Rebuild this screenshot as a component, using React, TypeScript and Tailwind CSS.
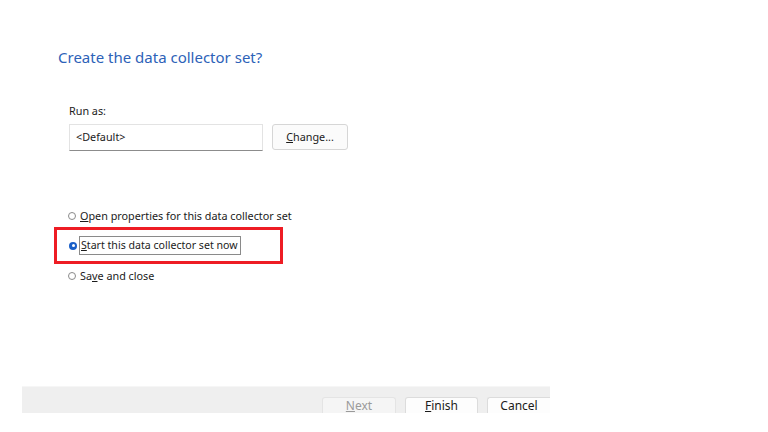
import React from 'react';

function Radio({ checked }: { checked?: boolean }) {
  if (checked) {
    return (
      <span className="w-[8px] h-[8px] rounded-full bg-[#1a5fc8] flex items-center justify-center shrink-0">
        <span className="w-[3px] h-[3px] rounded-full bg-white" />
      </span>
    );
  }
  return <span className="w-[8px] h-[8px] rounded-full border border-[#8a8a8a] bg-white shrink-0" />;
}

export default function App() {
  return (
    <div
      className="w-[768px] h-[432px] bg-white flex flex-col overflow-hidden text-[#1b1b1b] whitespace-nowrap"
      style={{ fontFamily: '"Noto Sans", "Open Sans", sans-serif' }}
    >
      {/* Header */}
      <div className="pt-[46px] pl-[58px] text-[15px] leading-[22px] text-[#2d62b8]">
        Create the data collector set?
      </div>

      {/* Run as */}
      <div className="pl-[69px] pt-[36px] text-[10.8px]">
        <div className="leading-[14px]">Run as:</div>
        <div className="flex gap-[9px] mt-[6px]">
          <div className="w-[194px] h-[27px] border border-[#e3e3e3] border-b-[#8c8c8c] bg-white flex items-center pl-[6px]">
            &lt;Default&gt;
          </div>
          <div className="w-[76px] h-[26px] border border-[#d6d6d6] rounded-[3px] bg-[#fbfbfb] flex items-center justify-center">
            <span><span className="underline">C</span>hange...</span>
          </div>
        </div>
      </div>

      {/* Options */}
      <div className="pl-[54px] pt-[57px] text-[10.8px]">
        <div className="flex items-center gap-[4px] pl-[14px] h-[16px]">
          <Radio />
          <span><span className="underline">O</span>pen properties for this data collector set</span>
        </div>
        <div className="w-[229px] h-[37px] border-[3px] border-[#ee1c24] mt-[3px] flex items-center pl-[12px] gap-[2px]">
          <Radio checked />
          <span className="border border-[#8a8a8a] h-[19px] w-[162px] flex items-center pl-[1px] text-[10.6px]">
            <span><span className="underline">S</span>tart this data collector set now</span>
          </span>
        </div>
        <div className="flex items-center gap-[4px] pl-[14px] h-[16px] mt-[4px]">
          <Radio />
          <span>Sa<span className="underline">v</span>e and close</span>
        </div>
      </div>

      {/* Footer bar */}
      <div className="mt-auto mb-[19px] ml-[22px] w-[528px] h-[27px] bg-[#efefef] border-t border-[#f6f6f6] flex items-end justify-end gap-[9px] text-[12px] overflow-hidden">
        <div className="w-[74px] h-[16px] bg-[#f5f5f5] border border-b-0 border-[#e4e4e4] rounded-t-[3px] flex justify-center pt-[1px] text-[#9a9a9a] leading-[13px]">
          <span><span className="underline">N</span>ext</span>
        </div>
        <div className="w-[73px] h-[16px] bg-[#fdfdfd] border border-b-0 border-[#dcdcdc] rounded-t-[3px] flex justify-center pt-[1px] leading-[13px]">
          <span><span className="underline">F</span>inish</span>
        </div>
        <div className="w-[63px] h-[16px] bg-[#fdfdfd] border border-b-0 border-r-0 border-[#dcdcdc] rounded-tl-[3px] flex justify-center pt-[1px] leading-[13px]">
          <span>Cancel</span>
        </div>
      </div>
    </div>
  );
}
